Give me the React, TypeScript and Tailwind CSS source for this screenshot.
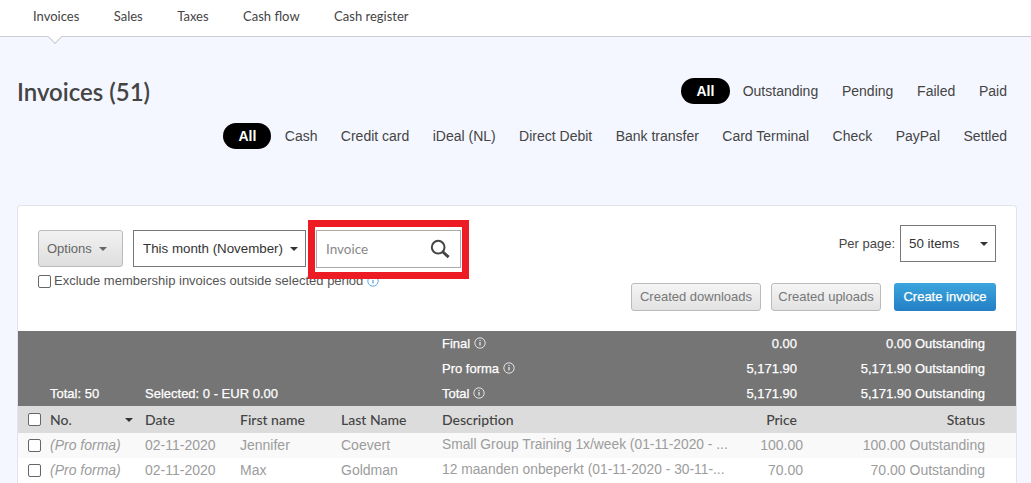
import React from 'react';

const arial = "font-['Liberation_Sans',Arial,sans-serif]";
const tabs = ['Invoices', 'Sales', 'Taxes', 'Cash flow', 'Cash register'];
const statusFilters = ['Outstanding', 'Pending', 'Failed', 'Paid'];
const methods = ['Cash', 'Credit card', 'iDeal (NL)', 'Direct Debit', 'Bank transfer', 'Card Terminal', 'Check', 'PayPal', 'Settled'];

const gridCols = 'grid grid-cols-[32px_95px_95px_101px_101px_minmax(0,1fr)_103px_182px_31px]';

function Caret({ className = 'border-t-[#333]' }: { className?: string }) {
  return <span className={`inline-block w-0 h-0 border-x-[4.5px] border-x-transparent border-t-[4.5px] ${className}`} />;
}

function InfoIcon({ className = 'text-white' }: { className?: string }) {
  return (
    <svg viewBox="0 0 12 12" className={`w-3 h-3 inline-block ${className}`} fill="none" stroke="currentColor" strokeWidth="0.8">
      <circle cx="6" cy="6" r="5.2" />
      <path d="M6 5v3.6M6 3v1" strokeWidth="1.1" />
    </svg>
  );
}

function Check() {
  return <span className="block w-[13px] h-[13px] rounded-[2px] border border-[#666] bg-white" />;
}

function SummaryRow({ label, price, status, left }: { label: string; price: string; status: string; left?: React.ReactNode }) {
  return (
    <div className={`${gridCols} h-[25px] items-center`}>
      {left ?? <div className="col-span-5" />}
      <div className="col-start-6 flex items-center gap-1">
        <span>{label}</span>
        <InfoIcon className="text-white -mt-[2px]" />
      </div>
      <div className="text-right pr-[6px]">{price}</div>
      <div className="text-right">{status}</div>
    </div>
  );
}

function InvoiceRow({ date, first, last, desc, price, bg }: { date: string; first: string; last: string; desc: string; price: string; bg: string }) {
  return (
    <div className={`${gridCols} h-[25px] items-center ${bg} text-[#9c9c9c]`}>
      <div className="pl-[10px]"><Check /></div>
      <div className="italic">(Pro forma)</div>
      <div>{date}</div>
      <div>{first}</div>
      <div>{last}</div>
      <div className="whitespace-nowrap text-[13.8px]">{desc}</div>
      <div className="text-right">{price}</div>
      <div className="text-right">{price} Outstanding</div>
    </div>
  );
}

export default function App() {
  return (
    <div className={`h-[483px] w-[1031px] overflow-hidden bg-[#f4f7ff] text-[#444] ${arial}`}>
      {/* Top tabs */}
      <div className="relative h-[37px] bg-white border-b border-[#c9ccd3] font-['Lato',sans-serif] text-[13px] text-[#444]">
        <div className="flex h-full items-center gap-[34.5px] pl-[33px] pb-[2px]">
          {tabs.map(t => <span key={t}>{t}</span>)}
        </div>
        <span className="absolute left-[50px] top-[32px] w-[10px] h-[10px] rotate-45 bg-white border-r border-b border-[#c9ccd3]" />
      </div>

      {/* Heading + filters */}
      <div className="h-[168px] px-[17px] pt-[37px]">
        <div className="flex items-center justify-between h-[34px] pr-[7px]">
          <h1 className="font-['Lato',sans-serif] text-[24px] font-semibold text-[#444] pt-[2px]">Invoices (51)</h1>
          <div className="flex items-center gap-[23.75px] text-[14px]">
            <span className="bg-black text-white font-bold rounded-full w-[49px] h-[26px] flex items-center justify-center -mr-[11px]">All</span>
            {statusFilters.map(s => <span key={s}>{s}</span>)}
          </div>
        </div>
        <div className="flex items-center justify-end gap-[23.4px] h-[26px] mt-[15px] pr-[7px] text-[14px]">
          <span className="bg-black text-white font-bold rounded-full w-[48px] h-[26px] flex items-center justify-center -mr-[10px]">All</span>
          {methods.map(m => <span key={m}>{m}</span>)}
        </div>
      </div>

      {/* Card */}
      <div className="relative ml-[17px] rounded-t-[4px] border border-b-0 border-[#e2e4ea] bg-white w-[1000px]">
        <div className="flex justify-between h-[125px] pl-[20px] pr-[20px]">
          <div className="pt-[24px]">
            <div className="flex items-start gap-[10px] h-[37px]">
              <button className="w-[85px] h-[37px] rounded-[3px] border border-[#bbb] bg-gradient-to-b from-[#f2f2f2] to-[#dedede] text-[13px] text-[#666] flex items-center gap-[7px] pl-[8px]">
                Options <Caret className="border-t-[#666]" />
              </button>
              <div className="w-[173px] h-[37px] border border-[#777] text-[13.33px] text-[#333] whitespace-nowrap flex items-center justify-between pl-[9px] pr-[7px]">
                This month (November) <Caret />
              </div>
              <div className="w-[145px] h-[38px] border border-[#aaa] flex items-center justify-between pl-[9px] pr-[10px] text-[13.5px] text-[#888] font-['Lato',sans-serif]">
                Invoice
                <svg viewBox="0 0 22 22" className="w-[20px] h-[20px]" fill="none" stroke="#444">
                  <circle cx="9" cy="9" r="7" strokeWidth="2.2" />
                  <path d="M14 14l6.5 6" strokeWidth="3.2" />
                </svg>
              </div>
            </div>
            <div className="flex items-center gap-[3px] mt-[7px] text-[13px] text-[#555] h-[14px]">
              <Check />
              <span>Exclude membership invoices outside selected period</span>
              <InfoIcon className="text-[#3f93dd] ml-[1px]" />
            </div>
          </div>
          <div className="pt-[19px] flex flex-col items-end">
            <div className="flex items-center gap-[5px] text-[13px] text-[#444]">
              Per page:
              <div className="w-[96px] h-[37px] border border-[#777] text-[13.33px] text-[#333] flex items-center justify-between pl-[8px] pr-[7px]">
                50 items <Caret />
              </div>
            </div>
            <div className="flex mt-[21px] text-[13px]">
              <button className="w-[130px] h-[28px] rounded-[3px] border border-[#bbb] bg-gradient-to-b from-[#f5f5f5] to-[#e2e2e2] text-[#777]">Created downloads</button>
              <button className="ml-[10px] w-[110px] h-[28px] rounded-[3px] border border-[#bbb] bg-gradient-to-b from-[#f5f5f5] to-[#e2e2e2] text-[#777]">Created uploads</button>
              <button className="ml-[13px] w-[102px] h-[28px] rounded-[3px] bg-gradient-to-b from-[#3ba5de] to-[#237fc4] text-white [-webkit-text-stroke:0.25px_white]">Create invoice</button>
            </div>
          </div>
        </div>

        {/* Summary band */}
        <div className="bg-[#757575] text-white text-[13px] [-webkit-text-stroke:0.25px_white]">
          <SummaryRow label="Final" price="0.00" status="0.00 Outstanding" />
          <SummaryRow label="Pro forma" price="5,171.90" status="5,171.90 Outstanding" />
          <SummaryRow
            label="Total"
            price="5,171.90"
            status="5,171.90 Outstanding"
            left={<>
              <div />
              <div>Total: 50</div>
              <div className="col-span-3">Selected: 0 - EUR 0.00</div>
            </>}
          />
        </div>

        {/* Table header */}
        <div className={`${gridCols} h-[27px] items-center bg-[#dcdcdc] text-[14px] font-['Lato',sans-serif] font-medium text-[#444]`}>
          <div className="pl-[10px]"><Check /></div>
          <div className="flex items-center justify-between pr-[12px]">No. <Caret /></div>
          <div>Date</div>
          <div>First name</div>
          <div>Last Name</div>
          <div>Description</div>
          <div className="text-right pr-[6px]">Price</div>
          <div className="text-right">Status</div>
        </div>
        <div className="text-[14px]">
          <InvoiceRow date="02-11-2020" first="Jennifer" last="Coevert" desc="Small Group Training 1x/week (01-11-2020 - ..." price="100.00" bg="bg-[#f9f9f9]" />
          <InvoiceRow date="02-11-2020" first="Max" last="Goldman" desc="12 maanden onbeperkt (01-11-2020 - 30-11-..." price="70.00" bg="bg-white" />
        </div>

        {/* Red annotation around the search box */}
        <div className="absolute left-[290px] top-[14px] w-[161px] h-[59px] border-[7px] border-[#ed1c24] pointer-events-none" />
      </div>
    </div>
  );
}
